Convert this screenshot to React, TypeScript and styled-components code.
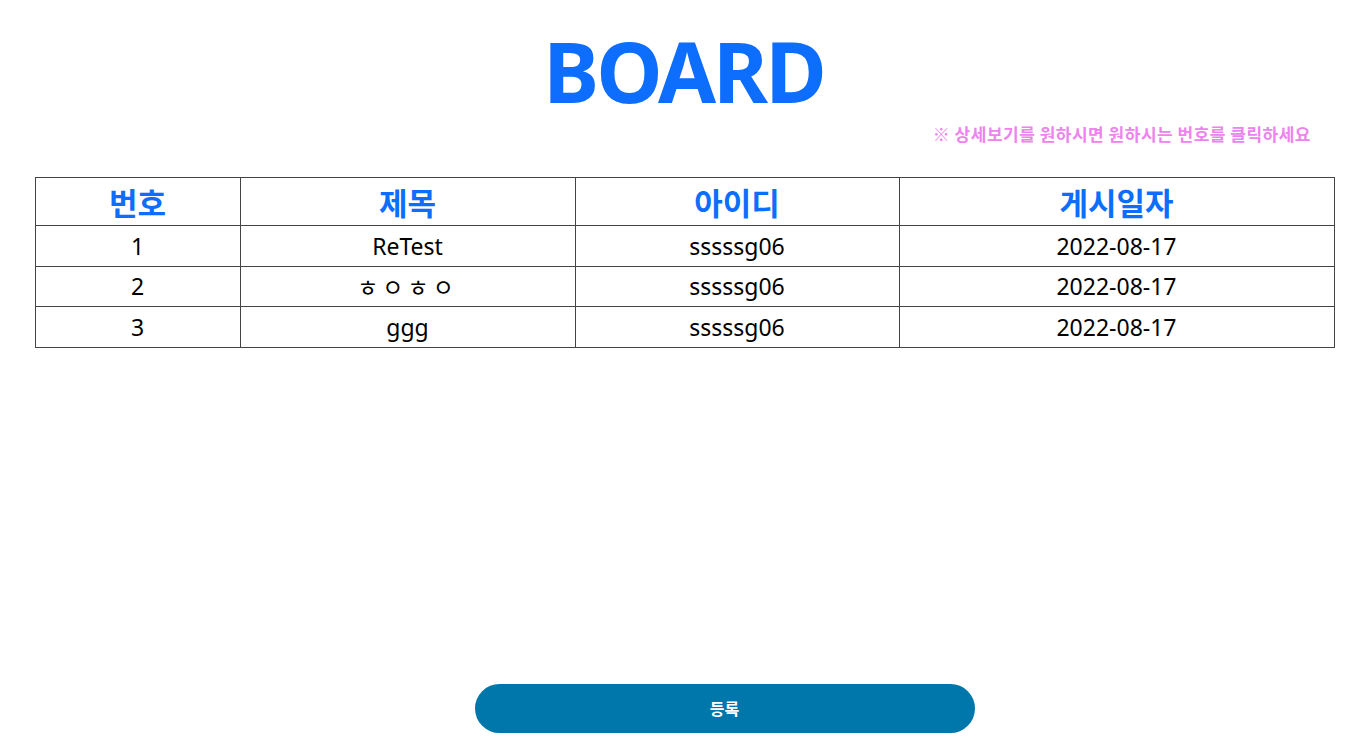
import React from "react";
import styled, { createGlobalStyle } from "styled-components";

const Global = createGlobalStyle`
  html, body { margin: 0; padding: 0; background: #fff; }
  body { font-family: "Noto Sans", "Noto Sans CJK KR", sans-serif; color: #000; }
`;

const Page = styled.div`
  display: flex;
  flex-direction: column;
  align-items: center;
  width: 100%;
`;

const Title = styled.h1`
  margin: 29px 0 0;
  font-size: 84px;
  line-height: 84px;
  font-weight: 700;
  color: #0d6efd;
  letter-spacing: -3px;
`;

const Hint = styled.p`
  align-self: stretch;
  margin: 10px 0 0;
  padding-right: 56px;
  text-align: right;
  font-family: "Noto Sans CJK KR", sans-serif;
  font-size: 17px;
  line-height: 22px;
  font-weight: 700;
  letter-spacing: 0.5px;
  color: #ee82ee;
`;

const Table = styled.table`
  margin-top: 32px;
  margin-left: 2px;
  width: 1295px;
  border-collapse: collapse;
  table-layout: fixed;
`;

const Th = styled.th<{ $w: number }>`
  width: ${(p) => p.$w}px;
  height: 47px;
  padding: 0;
  border: 1px solid #444;
  font-family: "Noto Sans CJK KR", sans-serif;
  font-size: 31px;
  font-weight: 700;
  color: #0d6efd;
  text-align: center;
  vertical-align: middle;
`;

const Td = styled.td<{ $spaced?: boolean }>`
  height: 39.6px;
  padding: 0;
  border: 1px solid #444;
  font-size: 23px;
  font-weight: 400;
  letter-spacing: ${(p) => (p.$spaced ? "4px" : "0")};
  text-align: center;
  vertical-align: middle;
`;

const Spacer = styled.div`
  height: 336px;
`;

const Button = styled.button`
  margin-left: 82px;
  width: 500px;
  height: 49px;
  border: none;
  border-radius: 25px;
  background: #0077aa;
  color: #fff;
  font-family: "Noto Sans CJK KR", sans-serif;
  font-size: 16px;
  font-weight: 700;
  cursor: pointer;
`;

const cols = [
  { label: "번호", w: 204 },
  { label: "제목", w: 334 },
  { label: "아이디", w: 323 },
  { label: "게시일자", w: 434 },
];

const rows = [
  { no: 1, title: "ReTest", id: "sssssg06", date: "2022-08-17" },
  { no: 2, title: "ㅎㅇㅎㅇ", id: "sssssg06", date: "2022-08-17" },
  { no: 3, title: "ggg", id: "sssssg06", date: "2022-08-17" },
];

export default function App() {
  return (
    <Page>
      <Global />
      <Title>BOARD</Title>
      <Hint>※ 상세보기를 원하시면 원하시는 번호를 클릭하세요</Hint>
      <Table>
        <thead>
          <tr>
            {cols.map((c) => (
              <Th key={c.label} $w={c.w}>
                {c.label}
              </Th>
            ))}
          </tr>
        </thead>
        <tbody>
          {rows.map((r) => (
            <tr key={r.no}>
              <Td>{r.no}</Td>
              <Td $spaced={/[ㄱ-ㅎ]/.test(r.title)}>{r.title}</Td>
              <Td>{r.id}</Td>
              <Td>{r.date}</Td>
            </tr>
          ))}
        </tbody>
      </Table>
      <Spacer />
      <Button>등록</Button>
    </Page>
  );
}
